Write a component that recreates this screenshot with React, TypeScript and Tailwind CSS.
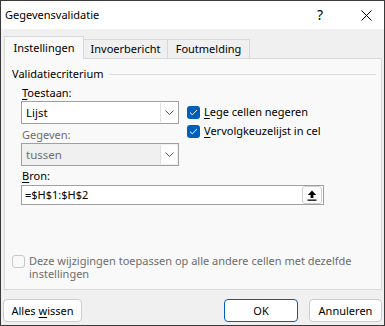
import React from "react";

const font = { fontFamily: '"Noto Sans", "Segoe UI", sans-serif' };

function Chevron() {
  return (
    <svg width="9" height="5" viewBox="0 0 9 5" fill="none">
      <path d="M0.5 0.5 L4.5 4.5 L8.5 0.5" stroke="#555" strokeWidth="1" />
    </svg>
  );
}

function Select({ value, disabled }: { value: string; disabled?: boolean }) {
  return (
    <div
      className={`flex h-[23px] w-[158px] items-stretch border border-[#a0a0a0] ${
        disabled ? "bg-[#f0f0f0] text-[#6d6d6d]" : "bg-white text-black"
      }`}
    >
      <div className="flex flex-1 items-center pl-[4px] text-[11.5px]">{value}</div>
      <div className="my-[1px] mr-[1px] flex w-[17px] items-center justify-center border-l border-[#e0e0e0] bg-white">
        <Chevron />
      </div>
    </div>
  );
}

function Check({ checked, disabled }: { checked?: boolean; disabled?: boolean }) {
  if (checked) {
    return (
      <div className="flex h-[13px] w-[13px] items-center justify-center rounded-[3px] bg-[#005fb8]">
        <svg width="9" height="7" viewBox="0 0 9 7" fill="none">
          <path d="M1 3.6 L3.3 5.8 L8 1" stroke="white" strokeWidth="1" />
        </svg>
      </div>
    );
  }
  return (
    <div
      className={`h-[13px] w-[13px] rounded-[3px] border ${
        disabled ? "border-[#c8c8c8] bg-[#f9f9f9]" : "border-[#8a8a8a] bg-white"
      }`}
    />
  );
}

export default function App() {
  return (
    <div
      className="flex h-[326px] w-[385px] flex-col border border-[#3a3a3a] bg-[#f0f0f0] text-[11px] leading-[16px] text-black"
      style={font}
    >
      {/* titel */}
      <div className="flex h-[28px] items-center bg-white pl-[4px]">
        <span className="flex-1 text-[11px]">Gegevensvalidatie</span>
        <span className="mr-[38px] text-[14px] leading-none">?</span>
        <svg width="11" height="11" viewBox="0 0 11 11" className="mr-[12px]">
          <path d="M0.5 0.5 L10.5 10.5 M10.5 0.5 L0.5 10.5" stroke="#000" strokeWidth="1" />
        </svg>
      </div>

      {/* tabs */}
      <div className="relative z-10 ml-[3px] mt-[7px] flex items-end">
        <div className="-mb-px flex h-[23px] w-[80px] items-center justify-center border border-b-0 border-[#d9d9d9] bg-[#f9f9f9]">
          Instellingen
        </div>
        <div className="flex h-[19px] w-[84px] items-center justify-center border border-b-0 border-l-0 border-[#d9d9d9]">
          Invoerbericht
        </div>
        <div className="flex h-[19px] w-[82px] items-center justify-center border border-b-0 border-l-0 border-[#d9d9d9]">
          Foutmelding
        </div>
      </div>

      {/* paneel */}
      <div className="ml-[3px] mr-[2px] flex h-[232px] flex-col border border-[#d9d9d9] bg-[#f9f9f9] pb-[9px] pl-[7px] pr-[5px] pt-[7px]">
        <div className="flex items-center">
          <span>Validatiecriterium</span>
          <div className="ml-[6px] h-px flex-1 bg-[#dcdcdc]" />
        </div>

        <div className="ml-[9px] mt-[3px] flex">
          <div className="flex flex-col">
            <span className="pl-px">
              <span className="underline underline-offset-2">T</span>oestaan:
            </span>
            <Select value="Lijst" />
            <span className="mt-[3px] pl-px text-[#6d6d6d]">Gegeven:</span>
            <Select value="tussen" disabled />
          </div>
          <div className="ml-[8px] mt-[18px] flex flex-col gap-[1px]">
            <div className="flex h-[18px] items-center gap-[4px]">
              <Check checked />
              <span>
                <span className="underline underline-offset-2">L</span>ege cellen negeren
              </span>
            </div>
            <div className="flex h-[18px] items-center gap-[4px]">
              <Check checked />
              <span>
                <span className="underline underline-offset-2">V</span>ervolgkeuzelijst in cel
              </span>
            </div>
          </div>
        </div>

        <span className="ml-[10px] mt-[2px]">
          <span className="underline underline-offset-2">B</span>ron:
        </span>
        <div className="ml-[9px] mt-px flex h-[20px] w-[303px] items-center border border-[#a0a0a0] bg-white">
          <span className="flex-1 pl-[3px]">=$H$1:$H$2</span>
          <div className="mr-px flex h-[18px] w-[20px] items-center justify-center rounded-[3px] border border-[#cfcfcf] bg-white">
            <svg width="10" height="11" viewBox="0 0 10 11">
              <path d="M5 0.5 L9.2 5 L6.4 5 L6.4 8 L3.6 8 L3.6 5 L0.8 5 Z" fill="#000" />
              <rect x="0.5" y="9.5" width="9" height="1.3" fill="#000" />
            </svg>
          </div>
        </div>

        <div className="mt-auto flex gap-[4px] text-[#6d6d6d]">
          <div className="mt-[1px]">
            <Check disabled />
          </div>
          <span className="w-[330px] leading-[13px]">
            Deze wijzigingen toepassen op alle andere cellen met dezelfde instellingen
          </span>
        </div>
      </div>

      {/* knoppen */}
      <div className="ml-[2px] mr-[2px] mt-[9px] flex items-center">
        <button className="h-[23px] w-[79px] rounded-[4px] border border-[#cccccc] bg-white">
          Alles <span className="underline underline-offset-2">w</span>issen
        </button>
        <div className="flex-1" />
        <button className="h-[23px] w-[74px] rounded-[4px] border-[1.5px] border-[#005fb8] bg-white">
          OK
        </button>
        <button className="ml-[11px] h-[23px] w-[73px] rounded-[4px] border border-[#cccccc] bg-white">
          Annuleren
        </button>
      </div>
    </div>
  );
}
